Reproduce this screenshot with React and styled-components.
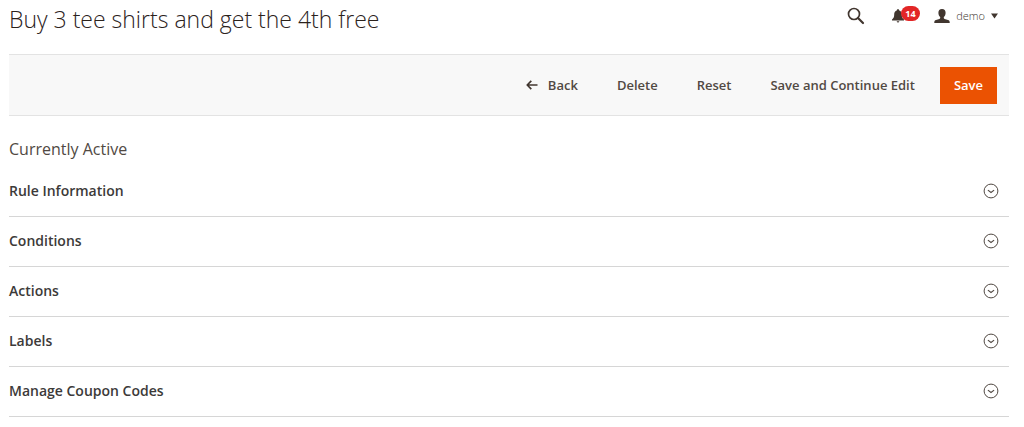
import { useState } from "react";
import styled, { createGlobalStyle } from "styled-components";

const GlobalStyle = createGlobalStyle`
    * {
        box-sizing: border-box;
    }
    body {
        margin: 0;
        background-color: #fff;
        color: #41362f;
        font-family: "Open Sans", "Noto Sans", sans-serif;
        font-size: 14px;
    }
    button {
        font-family: inherit;
        color: inherit;
        border: 0;
        background-color: transparent;
        cursor: pointer;
    }
`;

const Page = styled.div`
    padding: 0 15px 0 9px;
`;
const Header = styled.header`
    display: flex;
    justify-content: space-between;
    align-items: flex-start;
    height: 54px;
`;
const Title = styled.h1`
    margin: 0;
    padding-top: 3px;
    font-size: 23px;
    line-height: 32px;
    font-weight: 300;
    color: #2b221c;
`;
const UserTools = styled.div`
    display: flex;
    align-items: center;
    height: 32px;
    padding-right: 11px;
`;
const IconButton = styled.button`
    display: flex;
    position: relative;
    padding: 0;
    margin-right: ${(props) => props.$gap || 0}px;
`;
const Badge = styled.span`
    position: absolute;
    top: -3px;
    left: 9px;
    height: 15px;
    padding: 0 4px;
    border-radius: 8px;
    background-color: #e22626;
    color: #fff;
    font-size: 9px;
    line-height: 15px;
    font-weight: 700;
`;
const Account = styled.button`
    display: flex;
    align-items: center;
    gap: 6px;
    padding: 0;
    font-size: 11px;
    line-height: 16px;
    font-weight: 300;
`;

const Toolbar = styled.div`
    display: flex;
    justify-content: flex-end;
    align-items: center;
    height: 62px;
    padding-right: 12px;
    background-color: #f8f8f8;
    border: solid #e3e3e3;
    border-width: 1px 0;
`;
const Action = styled.button`
    display: flex;
    align-items: center;
    gap: 10px;
    height: 37px;
    padding: 0 ${(props) => (props.$last ? 25 : 19)}px 0 20px;
    font-size: 13px;
    font-weight: 600;
    color: #514943;
`;
const SaveButton = styled(Action)`
    padding: 0 14px;
    background-color: #eb5202;
    color: #fff;
`;

const Status = styled.p`
    margin: 0;
    padding: 21px 0 6px;
    font-size: 16px;
    line-height: 24px;
    color: #514943;
`;
const Section = styled.section`
    border-bottom: 1px solid #d6d6d6;
`;
const SectionHeading = styled.h2`
    margin: 0;
    font-size: 14px;
`;
const SectionToggle = styled.button`
    display: flex;
    justify-content: space-between;
    align-items: center;
    width: 100%;
    height: 49px;
    padding: 0 10px 2px 0;
    font-size: 14px;
    line-height: 20px;
    font-weight: 600;
    color: #3c3a39;
    text-align: left;
`;
const SectionBody = styled.div`
    padding: 0 0 16px;
`;

const SearchIcon = () => (
    <svg width="18" height="18" viewBox="0 0 18 18" fill="none" stroke="#41362f">
        <circle cx="7" cy="7" r="5.5" strokeWidth="1.7" />
        <path d="M11 11l5 5" strokeWidth="2.2" strokeLinecap="round" />
    </svg>
);

const BellIcon = () => (
    <svg width="12" height="14" viewBox="0 0 12 14" fill="#41362f">
        <path d="M6 0.3c.8 0 1.2.5 1.2 1.1 1.8.6 2.6 2 2.6 4 0 2.600.5 3.700 2.200 5.200v.9H0v-.9c1.600-1.500 2.200-2.600 2.200-5.200 0-2 .8-3.400 2.600-4C4.800.8 5.200.3 6 .3z" />
        <path d="M4.600 12.300h2.800c-.2.800-.7 1.200-1.400 1.200s-1.200-.4-1.400-1.200z" />
    </svg>
);

const UserIcon = () => (
    <svg width="16" height="14" viewBox="0 0 16 14" fill="#41362f">
        <path d="M8 0c2.500 0 3.600 1.600 3.600 3.700 0 1.700-.6 3.300-1.800 4.300v1.100c0 .5.300.7.800.9l3.400 1.100c1.100.4 1.700 1.100 1.700 2.200v.7H.3v-.7c0-1.100.6-1.800 1.700-2.200l3.400-1.100c.5-.2.800-.4.800-.9V8C5 7 4.400 5.400 4.400 3.700 4.400 1.600 5.500 0 8 0z" />
    </svg>
);

const CaretIcon = () => (
    <svg width="7" height="6" viewBox="0 0 7 6" fill="#41362f">
        <path d="M0 .5h7L3.500 5.500z" />
    </svg>
);

const BackIcon = () => (
    <svg width="12" height="10" viewBox="0 0 12 10" fill="none" stroke="#41362f" strokeWidth="1.7">
        <path d="M5.300.8L1.200 5l4.100 4.200M1.300 5H11.500" strokeLinejoin="round" />
    </svg>
);

const ToggleIcon = () => (
    <svg width="16" height="16" viewBox="0 0 16 16" fill="none" stroke="#514943">
        <circle cx="8" cy="8" r="6.900" strokeWidth="1" />
        <path d="M4.900 7.100L8 9.500l3.100-2.400" strokeWidth="1.200" />
    </svg>
);

const sections = [
    "Rule Information",
    "Conditions",
    "Actions",
    "Labels",
    "Manage Coupon Codes",
];

export default function App() {
    const [openSection, setOpenSection] = useState(null);
    return (
        <>
            <GlobalStyle />
            <Page>
                <Header>
                    <Title>Buy 3 tee shirts and get the 4th free</Title>
                    <UserTools>
                        <IconButton $gap={27} aria-label="Search">
                            <SearchIcon />
                        </IconButton>
                        <IconButton $gap={30} aria-label="Notifications">
                            <BellIcon />
                            <Badge>14</Badge>
                        </IconButton>
                        <Account>
                            <UserIcon />
                            demo
                            <CaretIcon />
                        </Account>
                    </UserTools>
                </Header>
                <Toolbar>
                    <Action>
                        <BackIcon />
                        Back
                    </Action>
                    <Action>Delete</Action>
                    <Action>Reset</Action>
                    <Action $last>Save and Continue Edit</Action>
                    <SaveButton>Save</SaveButton>
                </Toolbar>
                <main>
                    <Status>Currently Active</Status>
                    {sections.map((name) => (
                        <Section key={name}>
                            <SectionHeading>
                                <SectionToggle
                                    aria-expanded={openSection === name}
                                    onClick={() =>
                                        setOpenSection((prev) => (prev === name ? null : name))
                                    }
                                >
                                    {name}
                                    <ToggleIcon />
                                </SectionToggle>
                            </SectionHeading>
                            {openSection === name && <SectionBody />}
                        </Section>
                    ))}
                </main>
            </Page>
        </>
    );
}
